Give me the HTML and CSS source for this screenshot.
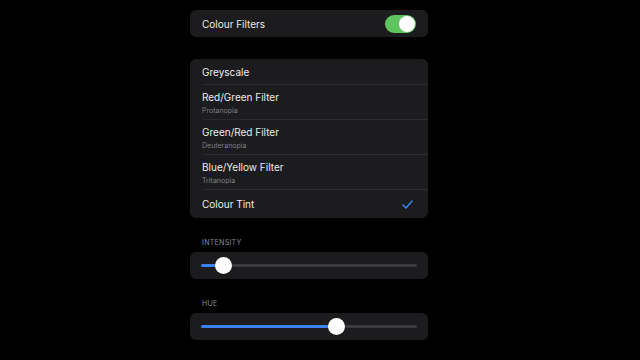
FILE: index.html
```html
<!DOCTYPE html>
<html>
<head>
<meta charset="utf-8">
<link rel="stylesheet" href="styles.css">
</head>
<body>
<div class="column">
  <div class="card toggle-card">
    <span class="title">Colour Filters</span>
    <span class="switch"><span class="knob"></span></span>
  </div>

  <div class="card list">
    <div class="row single"><span class="title">Greyscale</span></div>
    <div class="row double">
      <span class="title">Red/Green Filter</span>
      <span class="sub">Protanopia</span>
    </div>
    <div class="row double">
      <span class="title">Green/Red Filter</span>
      <span class="sub">Deuteranopia</span>
    </div>
    <div class="row double">
      <span class="title">Blue/Yellow Filter</span>
      <span class="sub">Tritanopia</span>
    </div>
    <div class="row last">
      <span class="title">Colour Tint</span>
      <svg class="check" width="11" height="9" viewBox="0 0 11 9"><polyline points="1,5 4,8 10,1" fill="none" stroke="#3b82f6" stroke-width="1.5" stroke-linecap="round" stroke-linejoin="round"/></svg>
    </div>
  </div>

  <div class="label">INTENSITY</div>
  <div class="card slider-card">
    <div class="track">
      <div class="fill" style="width:22px"></div>
      <div class="thumb" style="left:22px"></div>
    </div>
  </div>

  <div class="label">HUE</div>
  <div class="card slider-card">
    <div class="track">
      <div class="fill" style="width:135px"></div>
      <div class="thumb" style="left:135px"></div>
    </div>
  </div>
</div>
</body>
</html>
```
FILE: styles.css
```css
html, body {
  margin: 0;
  padding: 0;
  background: #000;
  height: 100%;
}
body {
  font-family: Inter, "Liberation Sans", sans-serif;
  color: #ececec;
}
.column {
  width: 238px;
  margin-left: 190px;
  padding-top: 10px;
  display: flex;
  flex-direction: column;
}
.card {
  background: #1c1c1e;
  border-radius: 6px;
}
.title {
  font-size: 10px;
  line-height: 12px;
  color: #ededed;
}
.toggle-card {
  height: 27px;
  display: flex;
  align-items: center;
  justify-content: space-between;
  padding: 0 12px 0 12px;
  box-sizing: border-box;
}
.switch {
  width: 31px;
  height: 18px;
  border-radius: 9px;
  background: #5dc460;
  display: flex;
  align-items: center;
  justify-content: flex-end;
  padding: 1px;
  box-sizing: border-box;
}
.knob {
  width: 16px;
  height: 16px;
  border-radius: 50%;
  background: #fff;
}
.list {
  margin-top: 22px;
  padding-left: 12px;
}
.row {
  display: flex;
  flex-direction: column;
  justify-content: center;
  border-bottom: 1px solid #2b2b2d;
  box-sizing: border-box;
  padding-right: 15px;
}
.row.single { height: 26px; }
.row.double { height: 35px; padding-top: 2px; }
.row.last {
  height: 28px;
  border-bottom: none;
  flex-direction: row;
  align-items: center;
  justify-content: space-between;
}
.sub {
  font-size: 7px;
  line-height: 9px;
  color: #7f7f84;
  margin-top: 3px;
}
.label {
  margin-top: 20px;
  margin-bottom: 4px;
  padding-left: 12px;
  font-size: 7px;
  line-height: 10px;
  letter-spacing: 0.3px;
  color: #8b8b90;
}
.slider-card {
  height: 27px;
  padding: 0 11px;
  display: flex;
  align-items: center;
}
.track {
  position: relative;
  flex: 1;
  height: 2.5px;
  border-radius: 2px;
  background: #3a3a3c;
}
.fill {
  height: 100%;
  border-radius: 2px;
  background: #3b82f6;
}
.thumb {
  position: absolute;
  top: 50%;
  width: 17px;
  height: 17px;
  margin-left: -8.5px;
  margin-top: -8.5px;
  border-radius: 50%;
  background: #fff;
  box-shadow: 0 1px 2px rgba(0,0,0,0.3);
}
```
